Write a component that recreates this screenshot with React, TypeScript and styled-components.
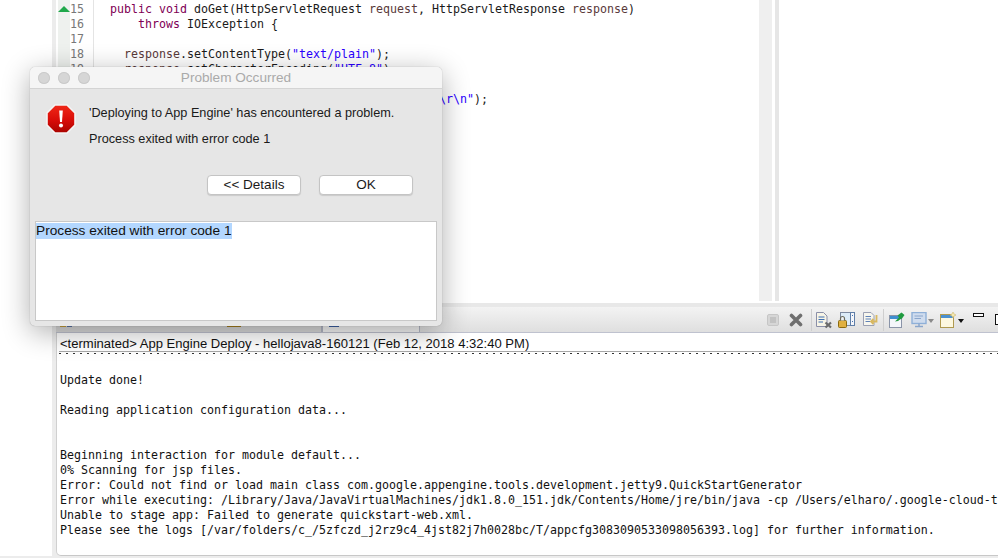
import styled, {createGlobalStyle} from "styled-components";

const mono = `"DejaVu Sans Mono", monospace`
const sans = `"Liberation Sans", Arial, sans-serif`

const GlobalStyle = createGlobalStyle`
  html, body {
    margin: 0;
    padding: 0;
    background: #fff;
    overflow: hidden;
  }
`;

type Token = {t: string, c?: "kw" | "str" | "param"}

const codeLines: {n: number, tokens: Token[]}[] = [
  {n: 15, tokens: [{t: "  "}, {t: "public void", c: "kw"}, {t: " doGet(HttpServletRequest "}, {t: "request", c: "param"}, {t: ", HttpServletResponse "}, {t: "response", c: "param"}, {t: ")"}]},
  {n: 16, tokens: [{t: "      "}, {t: "throws", c: "kw"}, {t: " IOException {"}]},
  {n: 17, tokens: []},
  {n: 18, tokens: [{t: "    "}, {t: "response", c: "param"}, {t: ".setContentType("}, {t: "\"text/plain\"", c: "str"}, {t: ");"}]},
  {n: 19, tokens: [{t: "    "}, {t: "response", c: "param"}, {t: ".setCharacterEncoding("}, {t: "\"UTF-8\"", c: "str"}, {t: ");"}]},
  {n: 20, tokens: []},
  {n: 21, tokens: [{t: "    "}, {t: "response", c: "param"}, {t: ".getWriter().print("}, {t: "\"Hello App Engine!\\r\\n\"", c: "str"}, {t: ");"}]},
]

const consoleLines = [
  "",
  "Update done!",
  "",
  "Reading application configuration data...",
  "",
  "",
  "Beginning interaction for module default...",
  "0% Scanning for jsp files.",
  "Error: Could not find or load main class com.google.appengine.tools.development.jetty9.QuickStartGenerator",
  "Error while executing: /Library/Java/JavaVirtualMachines/jdk1.8.0_151.jdk/Contents/Home/jre/bin/java -cp /Users/elharo/.google-cloud-tools-for-eclipse/cloud-sdk",
  "Unable to stage app: Failed to generate quickstart-web.xml.",
  "Please see the logs [/var/folders/c_/5zfczd_j2rz9c4_4jst82j7h0028bc/T/appcfg3083090533098056393.log] for further information.",
]

const StopIcon = () => (
  <svg width="12" height="12" viewBox="0 0 12 12">
    <rect x="0.5" y="0.5" width="11" height="11" rx="1.5" fill="#d6d6d6" stroke="#c6c6c6"/>
    <rect x="3" y="3" width="6" height="6" fill="#c2c2c2"/>
  </svg>
)

const RemoveIcon = () => (
  <svg width="14" height="14" viewBox="0 0 14 14">
    <path d="M2.5 2.5 L11.5 11.5 M11.5 2.5 L2.5 11.5" stroke="#6f6f6f" strokeWidth="3.6" strokeLinecap="round"/>
  </svg>
)

const ClearIcon = () => (
  <svg width="18" height="18" viewBox="0 0 18 18">
    <path d="M1.5 1.5 H8.5 L12 5 V15.5 H1.5 Z" fill="#f7f4e6" stroke="#8a8fa8"/>
    <path d="M3.5 6 H9.5 M3.5 8.5 H9.5 M3.5 11 H8" stroke="#3f6fb0"/>
    <path d="M10.5 11.5 L16 16.5 M16 11.5 L10.5 16.5" stroke="#6a6a6a" strokeWidth="2.2"/>
  </svg>
)

const ScrollLockIcon = () => (
  <svg width="18" height="18" viewBox="0 0 18 18">
    <rect x="2.5" y="1.5" width="14" height="13" fill="#dcecf8" stroke="#7d8aa0"/>
    <rect x="12.5" y="1.5" width="4" height="13" fill="#f4f6fa" stroke="#5f7ea8"/>
    <path d="M14.5 4 V5 M14.5 10 V11" stroke="#3f6fb0"/>
    <rect x="0.5" y="9.5" width="8" height="7" rx="1" fill="#e0b040" stroke="#8a6a10"/>
    <path d="M2.5 9.5 V7.5 a2 2 0 0 1 4 0 V9.5" fill="#eef2f6" stroke="#6a6a5a" strokeWidth="1.2"/>
  </svg>
)

const WordWrapIcon = () => (
  <svg width="18" height="18" viewBox="0 0 18 18">
    <path d="M1.5 1.5 H9 L12 4.5 V14.5 H1.5 Z" fill="#f7f6ee" stroke="#9aa0b4"/>
    <path d="M3.5 5.5 H9 M3.5 8 H9 M3.5 10.5 H8" stroke="#5f82b8"/>
    <path d="M14.5 4 V10.5 H9.5 M11.5 8 L9 10.5 L11.5 13" fill="none" stroke="#d8b860" strokeWidth="1.8"/>
  </svg>
)

const PinIcon = () => (
  <svg width="16" height="16" viewBox="0 0 16 16">
    <rect x="0.5" y="3.5" width="12" height="12" fill="#f4f6fa" stroke="#8a94a8"/>
    <rect x="1" y="4" width="11" height="3" fill="#3f8fd0"/>
    <path d="M6 9.5 L10 5.5 L8.5 3.5 L12.5 0.5 L15.5 3 L13 6.5 L11 7.5 L9 9 Z" fill="#1f9a3f"/>
  </svg>
)

const DisplayIcon = () => (
  <svg width="16" height="16" viewBox="0 0 16 16">
    <rect x="1" y="0.5" width="14" height="11" fill="#cfdcee" stroke="#8fb0d8" strokeWidth="1.4"/>
    <path d="M3.5 4 H12 M3.5 6.5 H10" stroke="#8aa6cc"/>
    <path d="M8 11.5 V14 M4 14.5 H12" stroke="#8aa6cc" strokeWidth="1.5"/>
  </svg>
)

const NewConsoleIcon = () => (
  <svg width="16" height="16" viewBox="0 0 16 16">
    <rect x="0.5" y="2.5" width="13" height="13" fill="#fdf8e0" stroke="#b09a50"/>
    <rect x="1" y="3" width="12" height="3" fill="#4a90d0"/>
    <path d="M13 0 L14 2 L16 3 L14 4 L13 6 L12 4 L10 3 L12 2 Z" fill="#f4e8b0" stroke="#c8b060" strokeWidth="0.5"/>
  </svg>
)

const ErrorIcon = () => (
  <svg width="30" height="30" viewBox="0 0 30 30">
    <defs>
      <linearGradient id="stopFill" x1="0" y1="0" x2="0" y2="1">
        <stop offset="0" stopColor="#f02818"/>
        <stop offset="0.55" stopColor="#d80c08"/>
        <stop offset="1" stopColor="#a80400"/>
      </linearGradient>
    </defs>
    <path d="M9 1 H21 L29 9 V21 L21 29 H9 L1 21 V9 Z" fill="url(#stopFill)" stroke="#f4f4f4" strokeWidth="1.6"/>
    <path d="M13.2 6.5 H16.8 L16 18 H14 Z" fill="#fff"/>
    <circle cx="15" cy="21.5" r="2" fill="#fff"/>
  </svg>
)

export default function App() {
  return (
    <Screen>
      <GlobalStyle/>
      <Workbench>
        <TopRow>
          <Gutter/>
          <EditorPane>
            <Ruler>
              {codeLines.map(line => (
                <RulerLine key={line.n}>
                  {line.n === 15 && <OverrideMark/>}
                  {line.n}
                </RulerLine>
              ))}
            </Ruler>
            <Code>
              {codeLines.map(line => (
                <CodeLine key={line.n}>
                  {line.tokens.map((token, i) => <Tok key={i} $kind={token.c}>{token.t}</Tok>)}
                </CodeLine>
              ))}
            </Code>
            <ScrollTrack/>
          </EditorPane>
          <PaneGap/>
          <OutlinePane/>
        </TopRow>
        <BottomRow>
          <BottomGutter/>
          <ConsoleView>
            <Sash/>
            <ViewBar>
              <Tabs>
                <ViewTab $active={false} $width={266}>
                  <TabMark $left={4} $width={6} $color="#c9a23c"/>
                  <TabMark $left={11} $width={5} $color="#5b76a8"/>
                  <TabMark $left={171} $width={14} $color="#a8801c"/>
                </ViewTab>
                <ViewTab $active={true} $width={98}>
                  <TabMark $left={6} $width={10} $color="#3f63a8"/>
                </ViewTab>
              </Tabs>
              <Tools>
                <ToolSlot $w={24}><StopIcon/></ToolSlot>
                <ToolSlot $w={22}><RemoveIcon/></ToolSlot>
                <ToolSep $left={4}/>
                <ToolSlot $w={23}><ClearIcon/></ToolSlot>
                <ToolSlot $w={24}><ScrollLockIcon/></ToolSlot>
                <ToolSlot $w={24}><WordWrapIcon/></ToolSlot>
                <ToolSep $left={0}/>
                <ToolSlot $w={26}><PinIcon/></ToolSlot>
                <ToolSlot $w={18}><DisplayIcon/></ToolSlot>
                <DropArrow $light/>
                <ToolSlot $w={20}><NewConsoleIcon/></ToolSlot>
                <DropArrow/>
                <MinBox/>
                <MaxBox/>
              </Tools>
            </ViewBar>
            <ConsoleBody>
              <ConsoleTitle>&lt;terminated&gt; App Engine Deploy - hellojava8-160121 (Feb 12, 2018 4:32:40 PM)</ConsoleTitle>
              <TitleRule/>
              <DotRule/>
              <ConsoleText>
                {consoleLines.map((line, i) => <ConsoleLine key={i}>{line}</ConsoleLine>)}
              </ConsoleText>
            </ConsoleBody>
          </ConsoleView>
        </BottomRow>
      </Workbench>

      <Dialog>
        <TitleBar>
          <Lights>
            <Light/><Light/><Light/>
          </Lights>
          <DialogTitle>Problem Occurred</DialogTitle>
        </TitleBar>
        <DialogBody>
          <MessageRow>
            <IconWrap><ErrorIcon/></IconWrap>
            <Messages>
              <Message>'Deploying to App Engine' has encountered a problem.</Message>
              <Message>Process exited with error code 1</Message>
            </Messages>
          </MessageRow>
          <Buttons>
            <MacButton>&lt;&lt; Details</MacButton>
            <MacButton>OK</MacButton>
          </Buttons>
          <Details>
            <Selected>Process exited with error code 1</Selected>
          </Details>
        </DialogBody>
      </Dialog>
    </Screen>
  );
}

const Screen = styled.div`
  position: relative;
  width: 998px;
  height: 558px;
  overflow: hidden;
  background: #fff;
`;

const Workbench = styled.div`
  display: flex;
  flex-direction: column;
  height: 100%;
`;

const TopRow = styled.div`
  display: flex;
  height: 301px;
`;

const BottomRow = styled.div`
  display: flex;
  flex: 1;
  min-height: 0;
`;

const Gutter = styled.div`
  width: 52px;
  flex: none;
  background: #fff;
`;

const BottomGutter = styled(Gutter)`
  box-sizing: border-box;
  border-bottom: 2px solid #ececec;
`;

const EditorPane = styled.div`
  width: 720px;
  flex: none;
  display: flex;
  border-left: 4px solid #ececec;
  box-sizing: border-box;
  background: #fff;
`;

const Ruler = styled.div`
  width: 36px;
  flex: none;
  box-sizing: border-box;
  padding-top: 2px;
  margin-left: 2px;
  border-right: 1px solid #e4e4e4;
  background: linear-gradient(90deg, #eef1ee 0, #eef1ee 12px, #fff 12px);
`;

const RulerLine = styled.div`
  position: relative;
  height: 15px;
  padding-left: 12px;
  font: 11.63px/15px ${mono};
  color: #787878;
`;

const OverrideMark = styled.span`
  position: absolute;
  left: 0;
  top: 4px;
  width: 0;
  height: 0;
  border-left: 6px solid transparent;
  border-right: 6px solid transparent;
  border-bottom: 6px solid #1fa84a;
`;

const Code = styled.div`
  flex: 1;
  min-width: 0;
  padding: 2px 0 0 2px;
  overflow: hidden;
`;

const CodeLine = styled.div`
  height: 15px;
  font: 11.63px/15px ${mono};
  white-space: pre;
  color: #1a1a1a;
`;

const Tok = styled.span<{$kind?: "kw" | "str" | "param"}>`
  color: ${p => p.$kind === "kw" ? "#7f0055" : p.$kind === "str" ? "#2a00ff" : p.$kind === "param" ? "#5a3a3a" : "inherit"};
`;

const ScrollTrack = styled.div`
  width: 13px;
  flex: none;
  background: #efefef;
`;

const PaneGap = styled.div`
  width: 7px;
  flex: none;
  box-sizing: border-box;
  border-left: 3px solid #fff;
  background: #e6e6e6;
`;

const OutlinePane = styled.div`
  flex: 1;
  background: #fff;
`;

const ConsoleView = styled.div`
  flex: 1;
  min-width: 0;
  display: flex;
  flex-direction: column;
  background: #ececec;
`;

const Sash = styled.div`
  height: 6px;
  flex: none;
  background: linear-gradient(180deg, #fff 0, #fff 2px, #e8e8e8 2px);
`;

const ViewBar = styled.div`
  height: 26px;
  flex: none;
  display: flex;
  justify-content: space-between;
  margin-left: 4px;
  box-sizing: border-box;
  border-bottom: 1px solid #bfc2cf;
  background: linear-gradient(180deg, #f3f3f3, #dfdfdf);
`;

const Tabs = styled.div`
  display: flex;
  align-items: flex-end;
`;

const ViewTab = styled.div<{$active: boolean, $width: number}>`
  position: relative;
  width: ${p => p.$width}px;
  height: 17px;
  box-sizing: border-box;
  background: ${p => p.$active ? "#f6f6f6" : "#d9d9d9"};
  border-right: 1px solid #b4b8c6;
  border-left: ${p => p.$active ? "1px solid #b4b8c6" : "0 none"};
`;

const TabMark = styled.span<{$left: number, $width: number, $color: string}>`
  position: absolute;
  left: ${p => p.$left}px;
  top: 5px;
  width: ${p => p.$width}px;
  height: 7px;
  background: ${p => p.$color};
`;

const Tools = styled.div`
  display: flex;
  align-items: center;
  flex: none;
  margin-right: -8px;
`;

const ToolSlot = styled.div<{$w: number}>`
  width: ${p => p.$w}px;
  flex: none;
  display: flex;
  justify-content: center;
  align-items: center;
`;

const ToolSep = styled.div<{$left: number}>`
  width: 1px;
  height: 22px;
  flex: none;
  background: #cfcfcf;
  margin-left: ${p => p.$left}px;
`;

const DropArrow = styled.div<{$light?: boolean}>`
  width: 0;
  height: 0;
  flex: none;
  margin: 2px 4px 0 0;
  border-left: 3px solid transparent;
  border-right: 3px solid transparent;
  border-top: 4px solid ${p => p.$light ? "#8a8a8a" : "#111"};
`;

const MinBox = styled.div`
  width: 9px;
  height: 2px;
  flex: none;
  margin: 0 11px 9px 5px;
  border: 1px solid #111;
  background: #fff;
`;

const MaxBox = styled.div`
  width: 9px;
  height: 9px;
  flex: none;
  border: 1px solid #111;
  background: #fff;
`;

const ConsoleBody = styled.div`
  flex: 1;
  min-height: 0;
  margin: 0 0 2px 4px;
  box-sizing: border-box;
  padding-top: 3px;
  background: #fff;
  border-bottom: 1px solid #c8c8c8;
  border-left: 1px solid #d0d0d0;
  border-bottom-left-radius: 5px;
  overflow: hidden;
`;

const ConsoleTitle = styled.div`
  font: 13.05px/15px ${sans};
  color: #111;
  padding-left: 3px;
  white-space: nowrap;
`;

const TitleRule = styled.div`
  height: 1px;
  background: #a8a8a8;
  margin-left: 2px;
`;

const DotRule = styled.div`
  height: 1px;
  margin: 1px 0 0 2px;
  background: repeating-linear-gradient(90deg, #333 0, #333 2px, transparent 2px, transparent 7px);
`;

const ConsoleText = styled.div`
  padding: 4px 0 0 3px;
`;

const ConsoleLine = styled.div`
  height: 15px;
  font: 11.63px/15px ${mono};
  color: #111;
  white-space: pre;
`;

const Dialog = styled.div`
  position: absolute;
  left: 30px;
  top: 67px;
  width: 412px;
  height: 259px;
  box-sizing: border-box;
  border-radius: 5px;
  background: #e6e6e6;
  box-shadow: 0 0 1px rgba(0, 0, 0, .35), 0 6px 28px rgba(0, 0, 0, .32);
  display: flex;
  flex-direction: column;
  overflow: hidden;
`;

const TitleBar = styled.div`
  position: relative;
  height: 22px;
  flex: none;
  display: flex;
  align-items: center;
  justify-content: center;
  box-sizing: border-box;
  background: #f5f5f5;
  border-bottom: 1px solid #d4d4d4;
`;

const Lights = styled.div`
  position: absolute;
  left: 8px;
  top: 5px;
  display: flex;
  gap: 8px;
`;

const Light = styled.span`
  width: 12px;
  height: 12px;
  border-radius: 50%;
  background: #d6d6d6;
  box-shadow: inset 0 0 0 1px #cbcbcb;
`;

const DialogTitle = styled.div`
  font: 13.6px/16px ${sans};
  color: #aaaaaa;
`;

const DialogBody = styled.div`
  flex: 1;
  min-height: 0;
  display: flex;
  flex-direction: column;
`;

const MessageRow = styled.div`
  display: flex;
  height: 86px;
  flex: none;
  padding: 15px 0 0 16px;
  box-sizing: border-box;
`;

const IconWrap = styled.div`
  width: 30px;
  height: 30px;
  flex: none;
  margin-right: 13px;
`;

const Messages = styled.div`
  display: flex;
  flex-direction: column;
  gap: 10px;
  padding-top: 1px;
`;

const Message = styled.div`
  font: 12.7px/16px ${sans};
  color: #1a1a1a;
  white-space: nowrap;
`;

const Buttons = styled.div`
  display: flex;
  justify-content: flex-end;
  gap: 18px;
  padding-right: 29px;
`;

const MacButton = styled.button`
  width: 94px;
  height: 20px;
  padding: 0;
  box-sizing: border-box;
  border: 1px solid #c4c4c4;
  border-radius: 4px;
  background: #fff;
  box-shadow: 0 1px 1px rgba(0, 0, 0, .12);
  font: 13.5px/18px ${sans};
  color: #1a1a1a;
`;

const Details = styled.div`
  margin: 26px 5px 0 5px;
  height: 100px;
  box-sizing: border-box;
  padding: 1px 0;
  background: #fff;
  border: 1px solid #c8c8c8;
  font: 13.7px/16px ${sans};
  color: #111;
`;

const Selected = styled.span`
  background: #b3d7ff;
  display: inline-block;
`;
